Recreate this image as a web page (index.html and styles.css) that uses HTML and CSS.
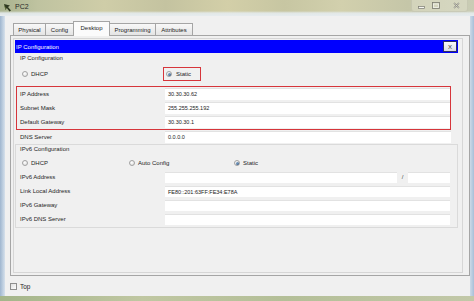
FILE: index.html
```html
<!DOCTYPE html>
<html>
<head>
<meta charset="utf-8">
<link rel="stylesheet" href="styles.css">
</head>
<body>
<div class="window">
  <div class="titlebar">
    <svg class="appicon" width="9" height="9" viewBox="0 0 9 9"><path d="M1 1 L7 2.5 L5 4 L8 7.5 L6.5 8.5 L3.8 5 L2.5 7 Z" fill="#2f3a22"/><path d="M1 1 L3 5.5 L2.5 7 Z" fill="#6d7d3e"/></svg>
    <span class="title">PC2</span>
    <div class="controls">
      <div class="cbtn cmin"><svg width="7" height="7" viewBox="0 0 7 7"><rect x="0.5" y="4.5" width="6" height="2" fill="#f4f4f0" stroke="#7a7a70" stroke-width="0.7"/></svg></div>
      <div class="cbtn cmax"><svg width="8" height="7" viewBox="0 0 8 7"><rect x="0.5" y="0.5" width="7" height="6" fill="none" stroke="#7a7a70" stroke-width="0.8"/><rect x="1.5" y="2" width="5" height="3.5" fill="none" stroke="#f4f4f0" stroke-width="0.7"/></svg></div>
      <div class="cbtn cclose"><svg width="7" height="7" viewBox="0 0 7 7"><path d="M1 1 L6 6 M6 1 L1 6" stroke="#7a7a70" stroke-width="1.3"/><path d="M1 1 L6 6 M6 1 L1 6" stroke="#f4f4f0" stroke-width="0.5"/></svg></div>
    </div>
  </div>
  <div class="main">
    <div class="client">
      <div class="tabs">
        <div class="tab w-phys">Physical</div>
        <div class="tab w-conf">Config</div>
        <div class="tab active w-desk">Desktop</div>
        <div class="tab w-prog">Programming</div>
        <div class="tab w-attr">Attributes</div>
      </div>
      <div class="panel">
        <div class="inner">
          <div class="header">
            <span>IP Configuration</span>
            <div class="xbtn">X</div>
          </div>
          <div class="ipv4">
            <div class="gtitle">IP Configuration</div>
            <div class="radios r4">
              <div class="ritem first"><span class="rb"></span><span>DHCP</span></div>
              <div class="ritem staticbox"><span class="rb on"></span><span>Static</span></div>
            </div>
            <div class="redbox">
              <div class="row"><span class="lbl">IP Address</span><div class="inp">30.30.30.62</div></div>
              <div class="row"><span class="lbl">Subnet Mask</span><div class="inp">255.255.255.192</div></div>
              <div class="row"><span class="lbl">Default Gateway</span><div class="inp">30.30.30.1</div></div>
            </div>
            <div class="row dns"><span class="lbl">DNS Server</span><div class="inp">0.0.0.0</div></div>
          </div>
          <div class="ipv6">
            <div class="gtitle">IPv6 Configuration</div>
            <div class="radios r6">
              <div class="ritem first"><span class="rb"></span><span>DHCP</span></div>
              <div class="ritem"><span class="rb"></span><span>Auto Config</span></div>
              <div class="ritem"><span class="rb on"></span><span>Static</span></div>
            </div>
            <div class="row r6row"><span class="lbl">IPv6 Address</span><div class="split"><div class="inp"></div><span class="slash">/</span><div class="inp"></div></div></div>
            <div class="row r6row"><span class="lbl">Link Local Address</span><div class="inp">FE80::201:63FF:FE34:E78A</div></div>
            <div class="row r6row"><span class="lbl">IPv6 Gateway</span><div class="inp"></div></div>
            <div class="row r6row"><span class="lbl">IPv6 DNS Server</span><div class="inp"></div></div>
          </div>
        </div>
      </div>
      <div class="footer">
        <span class="chk"></span><span>Top</span>
      </div>
    </div>
  </div>
  <div class="desk"></div>
</div>
</body>
</html>
```

FILE: styles.css
```css
html, body {
  margin: 0;
  padding: 0;
}
body {
  width: 474px;
  height: 301px;
  overflow: hidden;
  font-family: "Liberation Sans", Arial, sans-serif;
  font-size: 6px;
  color: #1e1e1e;
  background: #b8c19f;
}
.window {
  width: 474px;
  height: 301px;
  display: flex;
  flex-direction: column;
  background: linear-gradient(90deg, #9fb6cf 0, #d6e1ec 5px, #d6e1ec 469px, #a8bfd8 474px);
}
.titlebar {
  height: 16px;
  flex: none;
  display: flex;
  align-items: flex-start;
  background:
    linear-gradient(180deg, rgba(255,255,255,0) 0, rgba(255,255,255,0) 11px, rgba(228,234,236,0.9) 13px, #e6ecef 16px),
    linear-gradient(90deg, #a9b38f 0, #bfc3a0 8%, #cfcda8 22%, #c4c3a0 35%, #d3cfa8 48%, #c7c6a2 60%, #d2d0ad 72%, #c5c6a8 86%, #c9ccb5 100%);
}
.appicon {
  margin: 3px 0 0 3px;
  flex: none;
}
.title {
  margin: 3px 0 0 3px;
  font-size: 7px;
  line-height: 8px;
  color: #2a2a2a;
}
.controls {
  margin-left: auto;
  margin-right: 6px;
  display: flex;
  height: 12px;
  background: rgba(225, 226, 205, 0.5);
  border: 1px solid rgba(160, 160, 140, 0.25);
  border-top: none;
  border-radius: 0 0 3px 3px;
  box-sizing: border-box;
}
.cbtn {
  display: flex;
  align-items: center;
  justify-content: center;
}
.cmin { width: 18px; }
.cmax { width: 11px; margin-right: 4px; }
.cclose { width: 22px; }

.main {
  flex: none;
  height: 280px;
  padding: 0 4px 0 5px;
}
.desk {
  flex: none;
  height: 5px;
  background: linear-gradient(90deg, #a4b58a, #c0c7a2 30%, #b4bf98 60%, #c2c8a8);
}
.client {
  height: 280px;
  background: #f0f0f0;
  padding-top: 5px;
  box-sizing: border-box;
  display: flex;
  flex-direction: column;
}
.tabs {
  height: 14px;
  flex: none;
  display: flex;
  align-items: flex-end;
  padding-left: 9px;
  position: relative;
  z-index: 1;
}
.tab {
  height: 12px;
  box-sizing: border-box;
  border: 1px solid #a5a5a5;
  border-bottom: none;
  margin-left: -1px;
  background: linear-gradient(#f8f8f8, #e4e4e4);
  display: flex;
  align-items: center;
  justify-content: center;
  line-height: 8px;
  color: #222;
}
.tab.active {
  height: 15px;
  margin-bottom: -1px;
  background: #fbfbfb;
  padding-bottom: 2px;
}
.w-phys { width: 33px; }
.w-conf { width: 29px; }
.w-desk { width: 37px; }
.w-prog { width: 47px; }
.w-attr { width: 38px; }

.panel {
  flex: none;
  height: 241px;
  width: 460px;
  margin-left: 5px;
  border: 1px solid #a5a5a5;
  padding: 2px 6px 2px 2px;
  box-sizing: border-box;
  background: #f0f0f0;
}
.inner {
  height: 100%;
  box-sizing: border-box;
  border: 1px solid #d6d6d6;
  padding: 1px 4px 0 1px;
}
.header {
  height: 13px;
  background: #0000fe;
  color: #fff;
  display: flex;
  align-items: center;
  justify-content: space-between;
  padding-left: 1px;
  line-height: 8px;
}
.xbtn {
  width: 14px;
  height: 11px;
  box-sizing: border-box;
  margin-right: 1px;
  border: 1px solid #2e2e66;
  background: linear-gradient(#fafafa, #dcdce6);
  color: #333;
  font-size: 6px;
  display: flex;
  align-items: center;
  justify-content: center;
}

.ipv4 {
  padding: 0 7px 0 1px;
}
.gtitle {
  height: 9px;
  line-height: 9px;
  padding-left: 4px;
}
.ipv4 .gtitle {
  margin-top: 1px;
}
.radios {
  height: 14px;
  display: grid;
  align-items: center;
}
.r4 {
  margin-top: 4px;
  grid-template-columns: 147px 38px;
}
.r6 {
  margin-top: 2px;
  grid-template-columns: 113px 105px 1fr;
}
.ritem {
  display: flex;
  align-items: center;
  gap: 3px;
  height: 14px;
}
.ritem.first {
  padding-left: 6px;
}
.staticbox {
  box-sizing: border-box;
  border: 1px solid #d6353b;
  padding-left: 2px;
  gap: 4px;
}
.rb {
  width: 6px;
  height: 6px;
  border-radius: 50%;
  box-sizing: border-box;
  border: 1px solid #a2a2a2;
  background: radial-gradient(circle at 40% 35%, #ffffff, #d9d9d9);
  display: flex;
  align-items: center;
  justify-content: center;
  flex: none;
}
.rb.on::after {
  content: "";
  width: 3px;
  height: 3px;
  border-radius: 50%;
  background: radial-gradient(circle at 35% 35%, #7da2c8, #2b4f78);
}
.redbox {
  margin-top: 5px;
  border: 1px solid #d6353b;
}
.row {
  display: grid;
  grid-template-columns: 148px 1fr;
  align-items: center;
  height: 14px;
}
.lbl {
  padding-left: 3px;
  line-height: 8px;
}
.inp {
  height: 12px;
  box-sizing: border-box;
  background: #fff;
  border-top: 1px solid #e2e2e2;
  padding-left: 3px;
  font-size: 5.5px;
  line-height: 11px;
  color: #222;
}
.dns {
  height: 13px;
  padding-left: 1px;
}
.ipv6 {
  margin-top: 1px;
  border: 1px solid #dadada;
  padding: 0 7px 1px 0;
}
.ipv6 .row {
  grid-template-columns: 149px 1fr;
}
.ipv6 .lbl {
  padding-left: 4px;
}
.ipv6 .inp {
  height: 11px;
  line-height: 10px;
}
.split {
  display: grid;
  grid-template-columns: 1fr 11px 42px;
  align-items: center;
}
.slash {
  text-align: center;
  color: #444;
}
.footer {
  flex: 1;
  display: flex;
  align-items: center;
  padding-left: 5px;
  gap: 3px;
}
.chk {
  width: 7px;
  height: 7px;
  box-sizing: border-box;
  border: 1px solid #8e8e8e;
  background: linear-gradient(135deg, #e0e0e0, #fdfdfd);
}
.footer span:last-child {
  font-size: 6.5px;
}
```
